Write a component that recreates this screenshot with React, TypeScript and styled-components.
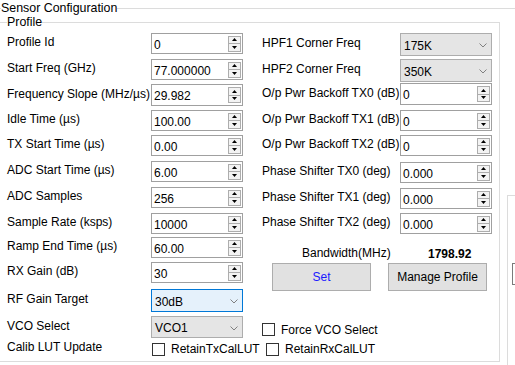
import React from "react";
import styled, { createGlobalStyle } from "styled-components";

const Global = createGlobalStyle`
  html, body { margin: 0; padding: 0; background: #fff; overflow: hidden; }
  body { font-family: "Liberation Sans", Arial, sans-serif; font-size: 12px; color: #000; }
`;

const Page = styled.div`
  width: 515px;
  height: 365px;
  overflow: hidden;
  background: #fff;
`;

const Group = styled.fieldset<{ $w: number; $h: number }>`
  margin: 0;
  padding: 0;
  min-width: 0;
  box-sizing: border-box;
  border: 1px solid #dcdcdc;
  width: ${(p) => p.$w}px;
  height: ${(p) => p.$h}px;
  flex: none;
`;

const OuterGroup = styled(Group)`
  margin: 1px 0 0 -8px;
`;

const SideGroup = styled(Group)`
  margin: 180px 0 0 7px;
`;

const Legend = styled.legend<{ $off: number; $size?: number }>`
  padding: 0;
  margin-left: ${(p) => p.$off}px;
  font-size: ${(p) => p.$size ?? 12}px;
  line-height: 14px;
  color: #000;
`;

const OuterBody = styled.div`
  display: flex;
  align-items: flex-start;
  padding-left: 6px;
`;

const ProfileBody = styled.div`
  display: flex;
  flex-direction: column;
  padding: 4px 0 0 7px;
`;

const SideBody = styled.div`
  padding: 67px 0 0 4px;
`;

const SideBox = styled.div`
  height: 22px;
  box-sizing: border-box;
  border: 1px solid #7a7a7a;
  border-right: none;
`;

const TopSection = styled.div`
  display: flex;
  align-items: flex-start;
`;

const Column = styled.div<{ $w: number; $ml?: number }>`
  display: flex;
  flex-direction: column;
  width: ${(p) => p.$w}px;
  margin-left: ${(p) => p.$ml ?? 0}px;
`;

const FieldRow = styled.div<{ $h: number; $lw: number }>`
  display: grid;
  grid-template-columns: ${(p) => p.$lw}px 92px;
  align-items: start;
  height: ${(p) => p.$h}px;
`;

const Label = styled.span<{ $ch: number }>`
  line-height: ${(p) => p.$ch - 2}px;
  white-space: nowrap;
`;

const SpinBox = styled.div<{ $h: number }>`
  display: flex;
  align-items: center;
  height: ${(p) => p.$h}px;
  box-sizing: border-box;
  border: 1px solid #a0a0a0;
  background: #fff;
  padding: 0 1px 0 2px;
`;

const Value = styled.span`
  flex: 1;
  padding-top: 2px;
  white-space: nowrap;
`;

const Spinner = styled.div`
  display: flex;
  flex-direction: column;
  width: 13px;
  height: 16px;
  box-sizing: border-box;
  border: 1px solid #adadad;
  background: #f3f3f3;
`;

const SpinHalf = styled.div`
  flex: 1;
  display: flex;
  align-items: center;
  justify-content: center;
  & + & {
    border-top: 1px solid #adadad;
  }
`;

const SelectBox = styled.div<{ $h: number; $focus?: boolean }>`
  display: flex;
  align-items: center;
  justify-content: space-between;
  height: ${(p) => p.$h}px;
  box-sizing: border-box;
  border: 1px solid ${(p) => (p.$focus ? "#0078d7" : "#adadad")};
  background: ${(p) => (p.$focus ? "#e5f1fb" : "#e5e5e5")};
  padding: 2px 4px 0 3px;
`;

const BandRow = styled.div`
  display: grid;
  grid-template-columns: 166px auto;
  height: 21px;
  align-items: center;
`;

const BandLabel = styled.span`
  padding-left: 40px;
  white-space: nowrap;
`;

const BandValue = styled.span`
  font-weight: bold;
  padding-top: 2px;
`;

const ButtonRow = styled.div`
  display: flex;
  gap: 17px;
  padding-left: 10px;
`;

const Button = styled.button<{ $blue?: boolean }>`
  width: 99px;
  height: 28px;
  margin: 0;
  padding: 0;
  box-sizing: border-box;
  border: 1px solid #adadad;
  background: #e1e1e1;
  font-family: inherit;
  font-size: 12px;
  color: ${(p) => (p.$blue ? "#1a1aff" : "#000")};
`;

const CheckItem = styled.label<{ $mt?: number }>`
  display: flex;
  align-items: center;
  gap: 6px;
  height: 13px;
  margin-top: ${(p) => p.$mt ?? 0}px;
  white-space: nowrap;
`;

const Box = styled.span`
  display: inline-block;
  width: 13px;
  height: 13px;
  box-sizing: border-box;
  border: 1px solid #333;
  background: #fff;
  flex: none;
`;

const BottomRow = styled.div`
  display: grid;
  grid-template-columns: 145px 114px auto;
  align-items: center;
  height: 14px;
`;

const BottomLabel = styled.span`
  margin-top: -4px;
`;

const Arrow = ({ up }: { up?: boolean }) => (
  <svg width="5" height="3" viewBox="0 0 5 3">
    <polygon points={up ? "2.5,0 5,3 0,3" : "0,0 5,0 2.5,3"} fill="#000" />
  </svg>
);

const Chevron = () => (
  <svg width="8" height="5" viewBox="0 0 8 5">
    <polyline points="0.5,0.5 4,4 7.5,0.5" fill="none" stroke="#808080" strokeWidth="1" />
  </svg>
);

type Field = { label: string; value: string; kind: "spin" | "select"; ch: number; h: number; focus?: boolean };

const Spin = ({ value, h }: { value: string; h: number }) => (
  <SpinBox $h={h}>
    <Value>{value}</Value>
    <Spinner>
      <SpinHalf>
        <Arrow up />
      </SpinHalf>
      <SpinHalf>
        <Arrow />
      </SpinHalf>
    </Spinner>
  </SpinBox>
);

const Select = ({ value, h, focus }: { value: string; h: number; focus?: boolean }) => (
  <SelectBox $h={h} $focus={focus}>
    <span>{value}</span>
    <Chevron />
  </SelectBox>
);

const leftFields: Field[] = [
  { label: "Profile Id", value: "0", kind: "spin", ch: 21, h: 26 },
  { label: "Start Freq (GHz)", value: "77.000000", kind: "spin", ch: 21, h: 25 },
  { label: "Frequency Slope (MHz/µs)", value: "29.982", kind: "spin", ch: 22, h: 26 },
  { label: "Idle Time (µs)", value: "100.00", kind: "spin", ch: 21, h: 25 },
  { label: "TX Start Time (µs)", value: "0.00", kind: "spin", ch: 21, h: 26 },
  { label: "ADC Start Time (µs)", value: "6.00", kind: "spin", ch: 21, h: 26 },
  { label: "ADC Samples", value: "256", kind: "spin", ch: 21, h: 26 },
  { label: "Sample Rate (ksps)", value: "10000", kind: "spin", ch: 21, h: 24 },
  { label: "Ramp End Time (µs)", value: "60.00", kind: "spin", ch: 21, h: 25 },
  { label: "RX Gain (dB)", value: "30", kind: "spin", ch: 21, h: 27 },
  { label: "RF Gain Target", value: "30dB", kind: "select", ch: 23, h: 27, focus: true },
  { label: "VCO Select", value: "VCO1", kind: "select", ch: 22, h: 26 },
];

const rightFields: Field[] = [
  { label: "HPF1 Corner Freq", value: "175K", kind: "select", ch: 23, h: 26 },
  { label: "HPF2 Corner Freq", value: "350K", kind: "select", ch: 23, h: 24 },
  { label: "O/p Pwr Backoff TX0 (dB)", value: "0", kind: "spin", ch: 22, h: 27 },
  { label: "O/p Pwr Backoff TX1 (dB)", value: "0", kind: "spin", ch: 21, h: 25 },
  { label: "O/p Pwr Backoff TX2 (dB)", value: "0", kind: "spin", ch: 21, h: 27 },
  { label: "Phase Shifter TX0 (deg)", value: "0.000", kind: "spin", ch: 21, h: 26 },
  { label: "Phase Shifter TX1 (deg)", value: "0.000", kind: "spin", ch: 21, h: 25 },
  { label: "Phase Shifter TX2 (deg)", value: "0.000", kind: "spin", ch: 21, h: 29 },
];

const renderField = (f: Field, lw: number) => (
  <FieldRow key={f.label} $h={f.h} $lw={lw}>
    <Label $ch={f.ch}>{f.label}</Label>
    {f.kind === "spin" ? <Spin value={f.value} h={f.ch} /> : <Select value={f.value} h={f.ch} focus={f.focus} />}
  </FieldRow>
);

export default function App() {
  return (
    <Page>
      <Global />
      <OuterGroup $w={640} $h={420}>
        <Legend $off={8} $size={12.4}>Sensor Configuration</Legend>
        <OuterBody>
          <Group $w={501} $h={347}>
            <Legend $off={7} $size={12.4}>Profile</Legend>
            <ProfileBody>
              <TopSection>
                <Column $w={236}>{leftFields.map((f) => renderField(f, 144))}</Column>
                <Column $w={230} $ml={19}>
                  {rightFields.map((f) => renderField(f, 138))}
                  <BandRow>
                    <BandLabel>Bandwidth(MHz)</BandLabel>
                    <BandValue>1798.92</BandValue>
                  </BandRow>
                  <ButtonRow>
                    <Button $blue>Set</Button>
                    <Button>Manage Profile</Button>
                  </ButtonRow>
                  <CheckItem $mt={32}>
                    <Box />
                    Force VCO Select
                  </CheckItem>
                </Column>
              </TopSection>
              <BottomRow>
                <BottomLabel>Calib LUT Update</BottomLabel>
                <CheckItem>
                  <Box />
                  RetainTxCalLUT
                </CheckItem>
                <CheckItem>
                  <Box />
                  RetainRxCalLUT
                </CheckItem>
              </BottomRow>
            </ProfileBody>
          </Group>
          <SideGroup $w={120} $h={200}>
            <SideBody>
              <SideBox />
            </SideBody>
          </SideGroup>
        </OuterBody>
      </OuterGroup>
    </Page>
  );
}
